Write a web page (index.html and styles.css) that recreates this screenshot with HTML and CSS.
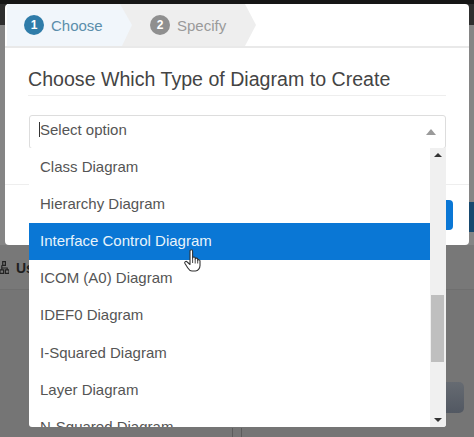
FILE: index.html
```html
<!DOCTYPE html>
<html lang="en">
<head>
<meta charset="utf-8">
<title>Choose Diagram</title>
<link rel="stylesheet" href="styles.css">
</head>
<body>
<div class="page">
  <div class="topbar"></div>
  <div class="nav"></div>
  <div class="upper">
    <span class="page-btn"></span>
  </div>
  <div class="tools">
    <svg class="tool-icon" width="9" height="16" viewBox="0 0 10 16"><path d="M3 1h3v4H3zM0 10h4v4H0zM6 10h4v4H6zM2 5v3h6v2M2 8v2" fill="none" stroke="#222" stroke-width="1.3"/></svg>
    <span class="tool-label">Us</span>
  </div>
  <div class="lower">
    <div class="lower-main">
      <span class="side-btn"></span>
    </div>
    <div class="lower-foot"><i></i><i></i></div>
  </div>
</div>

<div class="modal">
  <div class="steps">
    <div class="step step-active"><span class="badge">1</span><span>Choose</span></div>
    <div class="step step-next"><span class="badge">2</span><span>Specify</span></div>
  </div>
  <div class="body">
    <h2 class="title">Choose Which Type of Diagram to Create</h2>
    <div class="select">
      <span class="caret"></span><span class="placeholder">Select option</span>
      <span class="select-arrow"></span>
      <div class="dropdown">
        <ul class="options">
          <li>Class Diagram</li>
          <li>Hierarchy Diagram</li>
          <li class="selected">Interface Control Diagram</li>
          <li>ICOM (A0) Diagram</li>
          <li>IDEF0 Diagram</li>
          <li>I-Squared Diagram</li>
          <li>Layer Diagram</li>
          <li>N-Squared Diagram</li>
        </ul>
        <div class="scrollbar">
          <span class="arrow-up"></span>
          <span class="thumb"></span>
          <span class="arrow-down"></span>
        </div>
        <svg class="hand" width="18" height="24" viewBox="0 0 18 24"><path d="M6 2c0-1.6 2.6-1.6 2.6 0v7c.4-1.4 2.6-1.2 2.6.3v.6c.5-1.2 2.5-1 2.5.4v.8c.6-.9 2.3-.5 2.3.9v4.500c0 2.500-1.800 5.500-4.500 5.500H8.500C6 22.500 4.800 20.500 3.500 18.500L1 14.500c-.9-1.600 1-2.800 2.200-1.500L6 15.500z" fill="#fff" stroke="#333" stroke-width="1.100" stroke-linejoin="round"/><path d="M8.600 9v5M11.200 10v4.500M13.700 11v3.500" fill="none" stroke="#333" stroke-width=".9"/></svg>
      </div>
    </div>
  </div>
  <div class="footer"><span class="footer-btn"></span></div>
</div>
</body>
</html>
```

FILE: styles.css
```css
* { box-sizing: border-box; }
html, body { margin: 0; padding: 0; }
body {
  width: 474px;
  height: 437px;
  overflow: hidden;
  position: relative;
  background: #7c7c7c;
  font-family: "Liberation Sans", Arial, sans-serif;
}
.page { display: flex; flex-direction: column; height: 437px; }
.topbar { height: 4px; background: #161616; }
.nav { height: 21px; background: #2e2e2e; }
.upper {
  height: 220px;
  background: #858585;
  display: flex;
  justify-content: flex-end;
  align-items: flex-start;
  padding-top: 177px;
}
.page-btn { width: 5px; height: 30px; background: #17496f; }
.tools {
  height: 45px;
  display: flex;
  align-items: flex-start;
  gap: 7px;
  padding: 15px 0 0 0;
  background: #787878;
  border-bottom: 1px solid #6f6f6f;
}
.tool-label { font-size: 14px; font-weight: 700; color: #1f1f1f; line-height: 16px; }
.lower { flex: 1; display: flex; flex-direction: column; background: #757575; }
.lower-main { flex: 1; display: flex; justify-content: flex-end; padding: 92px 10px 0 0; }
.side-btn { width: 18px; height: 31px; border-radius: 0 5px 5px 0; background: linear-gradient(#666b72, #525862); }
.lower-foot { height: 9px; display: flex; gap: 8px; padding-left: 232px; }
.lower-foot i { width: 1px; background: #5c5c5c; }

.modal {
  position: absolute;
  left: 5px;
  top: 4px;
  width: 464px;
  height: 241px;
  background: #fff;
  border-radius: 4px;
  display: flex;
  flex-direction: column;
}
.steps {
  height: 44px;
  padding-left: 2px;
  display: flex;
  border-bottom: 2px solid #e9e9e9;
  flex: none;
}
.step {
  height: 42px;
  display: flex;
  align-items: center;
  gap: 7px;
  font-size: 15px;
}
.step-active {
  width: 125px;
  padding-left: 17px;
  background: #f1f6fb;
  color: #5b8eab;
  clip-path: polygon(0 0, 113px 0, 125px 50%, 115px 100%, 0 100%);
  z-index: 1;
}
.step-next {
  width: 136px;
  margin-left: -12px;
  padding-left: 30px;
  background: #eeeeee;
  color: #9a9a9a;
  clip-path: polygon(0 0, 125px 0, 136px 50%, 125px 100%, 0 100%);
}
.badge {
  width: 20px;
  height: 20px;
  border-radius: 50%;
  background: #2f7ca9;
  color: #fff;
  font-size: 12px;
  font-weight: 700;
  display: flex;
  align-items: center;
  justify-content: center;
}
.step-next .badge { background: #8f8f8f; }
.body { flex: 1; padding: 0 23px; }
.title {
  margin: 19px 0 0;
  height: 29px;
  font-size: 19.6px;
  font-weight: 400;
  line-height: 24px;
  color: #444;
  border-bottom: 1px solid #eee;
}
.select {
  position: relative;
  margin: 19px 0 0 1px;
  width: 417px;
  height: 34px;
  border: 1px solid #ddd;
  border-radius: 3px;
  display: flex;
  align-items: center;
  padding: 0 0 5px 9px;
  font-size: 15px;
  color: #555;
}
.caret { width: 1px; height: 15px; background: #333; margin-right: -1px; }
.placeholder { padding-left: 1px; }
.select-arrow {
  position: absolute;
  right: 9px;
  top: 13px;
  border: 5px solid transparent;
  border-top: 0;
  border-bottom: 6px solid #9a9a9a;
}
.dropdown {
  position: absolute;
  left: -1px;
  top: 32px;
  width: 417px;
  height: 279px;
  background: #fff;
  border-radius: 0 0 3px 3px;
  display: flex;
  overflow: hidden;
}
.options {
  list-style: none;
  margin: 0;
  padding: 0.6px 0 0;
  flex: 1;
  overflow: hidden;
  color: #555;
}
.options li {
  height: 37.2px;
  line-height: 35px;
  padding-left: 11px;
  white-space: nowrap;
  font-size: 15px;
}
.options .selected { background: #0a77d5; color: #e8f4fb; }
.scrollbar {
  width: 16px;
  background: #f0f0f0;
  position: relative;
}
.arrow-up, .arrow-down {
  position: absolute;
  left: 4px;
  border: 4px solid transparent;
}
.arrow-up { top: 5px; border-top: 0; border-bottom: 4px solid #333; }
.arrow-down { bottom: 5px; border-bottom: 0; border-top: 4px solid #333; }
.thumb {
  position: absolute;
  left: 1px;
  top: 147px;
  width: 13px;
  height: 67px;
  background: #bfbfbf;
}
.hand { position: absolute; left: 155px; top: 101px; }
.footer {
  height: 61px;
  flex: none;
  border-top: 1px solid #eee;
  display: flex;
  justify-content: flex-end;
  padding: 15px 16px 0 0;
}
.footer-btn { width: 8px; height: 30px; background: #0a77d5; border-radius: 0 4px 4px 0; }
```
